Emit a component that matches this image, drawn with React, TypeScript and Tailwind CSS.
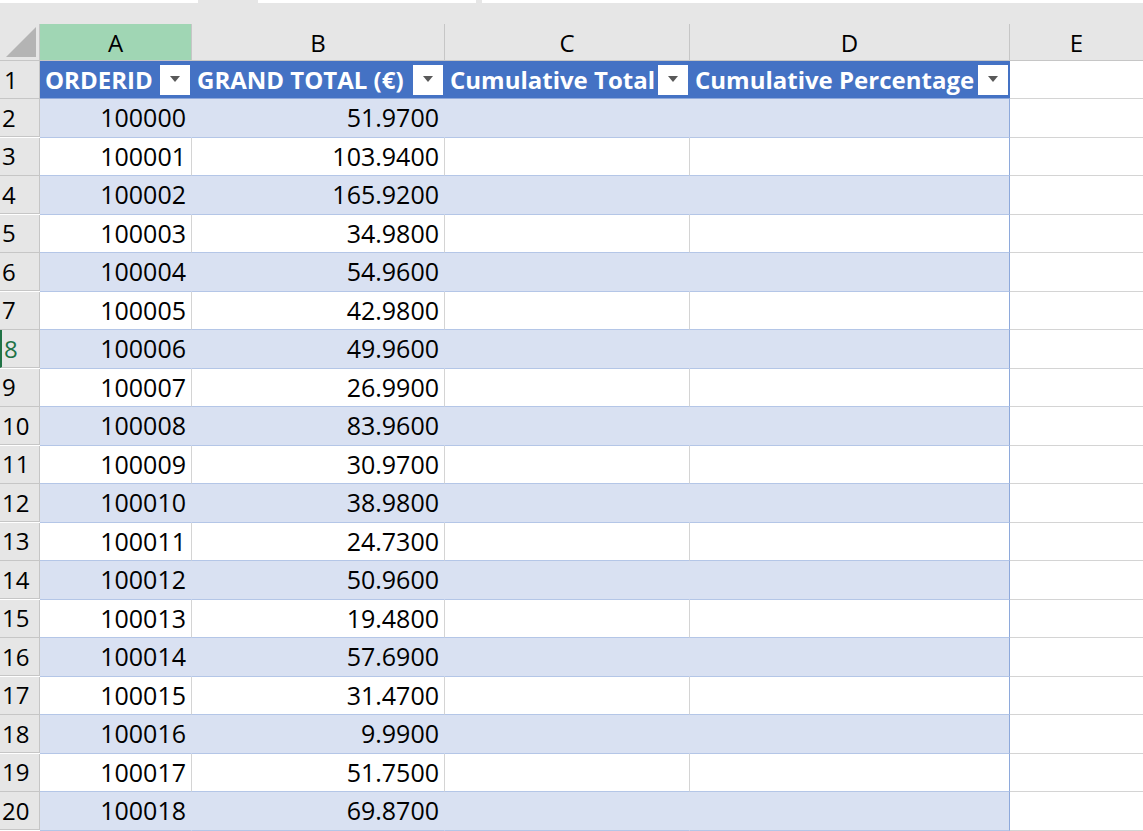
const rows: [string, string][] = [
  ['100000', '51.9700'], ['100001', '103.9400'], ['100002', '165.9200'], ['100003', '34.9800'],
  ['100004', '54.9600'], ['100005', '42.9800'], ['100006', '49.9600'], ['100007', '26.9900'],
  ['100008', '83.9600'], ['100009', '30.9700'], ['100010', '38.9800'], ['100011', '24.7300'],
  ['100012', '50.9600'], ['100013', '19.4800'], ['100014', '57.6900'], ['100015', '31.4700'],
  ['100016', '9.9900'], ['100017', '51.7500'], ['100018', '69.8700'],
];

const cols = 'grid grid-cols-[40px_152px_253px_245px_320px_1fr]';

function Drop() {
  return (
    <span className="ml-auto mr-[2px] flex h-[30px] w-[30px] shrink-0 items-center justify-center bg-white">
      <svg width="12" height="7" viewBox="0 0 12 7"><path d="M1 0h10L6 6z" fill="#595959" /></svg>
    </span>
  );
}

function HeadCell({ label }: { label: string }) {
  return (
    <div className="flex h-[38px] items-center border-b border-[#8ea9db] bg-[#4472c4] pl-[5px] font-bold text-white">
      <span className="whitespace-nowrap">{label}</span>
      <Drop />
    </div>
  );
}

export default function App() {
  return (
    <div className="h-[831px] w-[1143px] overflow-hidden bg-white text-[24px] text-black" style={{ fontFamily: '"Open Sans", "Noto Sans", sans-serif' }}>
      {/* top strip */}
      <div className="relative h-[24px] bg-[#e6e6e6]">
        <div className="absolute left-0 top-0 h-[3px] w-[198px] bg-white" />
        <div className="absolute left-[258px] top-0 h-[3px] w-[218px] bg-white" />
        <div className="absolute left-[482px] top-0 right-0 h-[3px] bg-white" />
      </div>
      {/* column headers */}
      <div className={`${cols} h-[37px] bg-[#e6e6e6] border-b border-[#c6c6c6] text-[24px]`}>
        <div className="flex items-end justify-end border-r border-[#c6c6c6] p-[3px]">
          <svg width="30" height="30" viewBox="0 0 30 30"><path d="M30 0v30H0z" fill="#b4b4b4" /></svg>
        </div>
        <div className="flex items-end justify-center bg-[#a0d6b4] border-r border-[#c6c6c6] leading-[34px]">A</div>
        <div className="flex items-end justify-center border-r border-[#c6c6c6] leading-[34px]">B</div>
        <div className="flex items-end justify-center border-r border-[#c6c6c6] leading-[34px]">C</div>
        <div className="flex items-end justify-center border-r border-[#c6c6c6] leading-[34px]">D</div>
        <div className="flex items-end justify-center leading-[34px]">E</div>
      </div>
      {/* row 1 */}
      <div className={cols}>
        <div className="flex h-[38px] items-center border-b border-r border-[#c6c6c6] bg-[#e6e6e6] pl-[4px]">1</div>
        <HeadCell label="ORDERID" />
        <HeadCell label="GRAND TOTAL (€)" />
        <HeadCell label="Cumulative Total" />
        <HeadCell label="Cumulative Percentage" />
        <div className="border-b border-[#d4d4d4]" />
      </div>
      {rows.map(([id, total], i) => {
        const band = i % 2 === 0 ? 'bg-[#d9e1f2]' : 'bg-white';
        const edge = i % 2 === 0 ? 'border-r-transparent' : 'border-r-[#d4d4d4]';
        const n = i + 2;
        return (
          <div key={id} className={cols}>
            <div className={`flex h-[38px] items-center border-b border-r border-[#c6c6c6] bg-[#e6e6e6] pl-[2px] ${n === 8 ? 'border-l-2 border-l-[#217346] text-[#217346]' : ''}`}>{n}</div>
            <div className={`${band} ${edge} flex items-center justify-end border-b border-r border-b-[#b4c6e7] pr-[5px] text-[25px]`}>{id}</div>
            <div className={`${band} ${edge} flex items-center justify-end border-b border-r border-b-[#b4c6e7] pr-[5px] text-[25px]`}>{total}</div>
            <div className={`${band} ${edge} border-b border-r border-b-[#b4c6e7]`} />
            <div className={`${band} border-b border-r border-b-[#b4c6e7] border-r-[#8ea9db]`} />
            <div className="border-b border-[#d4d4d4]" />
          </div>
        );
      })}
      <div className={cols}>
        <div className="h-[38px] border-r border-[#c6c6c6] bg-[#e6e6e6]" />
        <div className="border-r border-[#d4d4d4]" />
        <div className="border-r border-[#d4d4d4]" />
        <div className="border-r border-[#d4d4d4]" />
        <div className="border-r border-[#d4d4d4]" />
        <div />
      </div>
    </div>
  );
}
